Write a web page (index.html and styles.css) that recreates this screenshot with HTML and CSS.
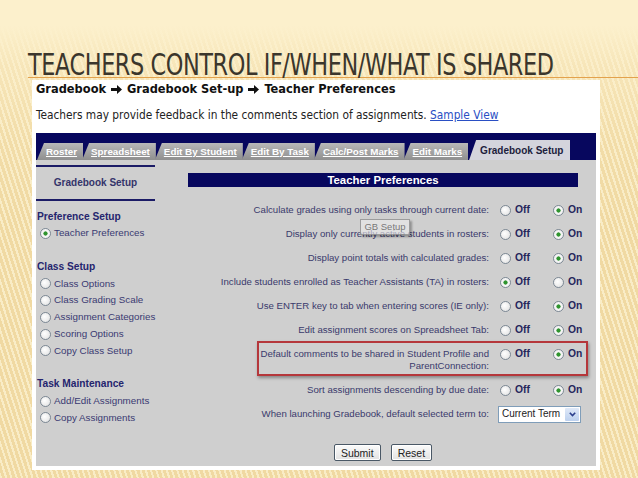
FILE: index.html
```html
<!DOCTYPE html>
<html lang="en">
<head>
    <meta charset="UTF-8">
    <meta name="viewport" content="width=device-width, initial-scale=1.0">
    <link rel="stylesheet" href="styles.css">
    <title>Teachers Control If/When/What Is Shared</title>
</head>
<body>
    <div class="slide">
        <h1 class="title"><span class="title-text">TEACHERS CONTROL IF/WHEN/WHAT IS SHARED</span></h1>

        <div class="shot">
            <div class="crumbs">Gradebook <svg class="arrow" width="11" height="9" viewBox="0 0 11 9"><path d="M0 3 H6 V0 L11 4.5 L6 9 V6 H0 Z" fill="#111"/></svg> Gradebook Set-up <svg class="arrow" width="11" height="9" viewBox="0 0 11 9"><path d="M0 3 H6 V0 L11 4.5 L6 9 V6 H0 Z" fill="#111"/></svg> Teacher Preferences</div>
            <p class="intro">Teachers may provide feedback in the comments section of assignments. <a href="#">Sample View</a></p>

            <div class="tabbar">
                <a class="tab" href="#">Roster</a>
                <a class="tab" href="#">Spreadsheet</a>
                <a class="tab" href="#">Edit By Student</a>
                <a class="tab" href="#">Edit By Task</a>
                <a class="tab" href="#">Calc/Post Marks</a>
                <a class="tab" href="#">Edit Marks</a>
                <span class="tab active">Gradebook Setup</span>
            </div>

            <div class="panel">
                <div class="side">
                    <div class="side-head">Gradebook Setup</div>

                    <div class="group">
                        <div class="group-title">Preference Setup</div>
                        <div class="opt"><span class="radio on"></span>Teacher Preferences</div>
                    </div>

                    <div class="group">
                        <div class="group-title">Class Setup</div>
                        <div class="opt"><span class="radio"></span>Class Options</div>
                        <div class="opt"><span class="radio"></span>Class Grading Scale</div>
                        <div class="opt"><span class="radio"></span>Assignment Categories</div>
                        <div class="opt"><span class="radio"></span>Scoring Options</div>
                        <div class="opt"><span class="radio"></span>Copy Class Setup</div>
                    </div>

                    <div class="group">
                        <div class="group-title">Task Maintenance</div>
                        <div class="opt"><span class="radio"></span>Add/Edit Assignments</div>
                        <div class="opt"><span class="radio"></span>Copy Assignments</div>
                    </div>
                </div>

                <div class="main">
                    <div class="bar">Teacher Preferences</div>

                    <div class="prefs">
                        <div class="row">
                            <div class="label">Calculate grades using only tasks through current date:</div>
                            <div class="choice"><span class="radio"></span>Off</div>
                            <div class="choice"><span class="radio on"></span>On</div>
                        </div>
                        <div class="row">
                            <div class="label">Display only currently active students in rosters:</div>
                            <div class="choice"><span class="radio"></span>Off</div>
                            <div class="choice"><span class="radio on"></span>On</div>
                        </div>
                        <div class="row">
                            <div class="label">Display point totals with calculated grades:</div>
                            <div class="choice"><span class="radio"></span>Off</div>
                            <div class="choice"><span class="radio on"></span>On</div>
                        </div>
                        <div class="row">
                            <div class="label">Include students enrolled as Teacher Assistants (TA) in rosters:</div>
                            <div class="choice"><span class="radio on"></span>Off</div>
                            <div class="choice"><span class="radio"></span>On</div>
                        </div>
                        <div class="row">
                            <div class="label">Use ENTER key to tab when entering scores (IE only):</div>
                            <div class="choice"><span class="radio"></span>Off</div>
                            <div class="choice"><span class="radio on"></span>On</div>
                        </div>
                        <div class="row">
                            <div class="label">Edit assignment scores on Spreadsheet Tab:</div>
                            <div class="choice"><span class="radio"></span>Off</div>
                            <div class="choice"><span class="radio on"></span>On</div>
                        </div>
                        <div class="row highlight">
                            <div class="label">Default comments to be shared in Student Profile and<br>ParentConnection:</div>
                            <div class="choice"><span class="radio"></span>Off</div>
                            <div class="choice"><span class="radio on"></span>On</div>
                        </div>
                        <div class="row">
                            <div class="label">Sort assignments descending by due date:</div>
                            <div class="choice"><span class="radio"></span>Off</div>
                            <div class="choice"><span class="radio on"></span>On</div>
                        </div>
                        <div class="row">
                            <div class="label">When launching Gradebook, default selected term to:</div>
                            <div class="select">
                                <span class="select-value">Current Term</span>
                                <span class="select-btn">
                                    <svg width="7" height="5" viewBox="0 0 7 5"><path d="M0.8 0.8 L3.5 3.6 L6.2 0.8" fill="none" stroke="#2b3f8c" stroke-width="1.6"/></svg>
                                </span>
                            </div>
                        </div>
                    </div>

                    <div class="buttons">
                        <button class="btn">Submit</button>
                        <button class="btn">Reset</button>
                    </div>

                    <div class="tip">GB Setup</div>
                </div>
            </div>
        </div>
    </div>
</body>
</html>
```

FILE: styles.css
```css
body {
    margin: 0;
    padding: 0;
}

.slide {
    width: 638px;
    height: 478px;
    overflow: hidden;
    background:
        linear-gradient(#fcf0cc 0, #fcf0cc 25px, rgba(252, 240, 204, 0.55) 65px, rgba(252, 240, 204, 0.15) 140px, rgba(252, 240, 204, 0) 220px),
        repeating-linear-gradient(72deg, rgba(255, 249, 222, 0.6) 0 2px, rgba(255, 249, 222, 0) 2px 5px),
        #f0d9a2;
}

.title {
    margin: 0 0 0 28px;
    padding-top: 53px;
    height: 24px;
    white-space: nowrap;
    font-family: "DejaVu Sans Condensed", "DejaVu Sans", sans-serif;
    font-stretch: condensed;
    font-weight: normal;
    font-size: 30px;
    line-height: 24px;
    letter-spacing: -0.5px;
    color: #3b362c;
    border-bottom: 1px solid #e3a24c;
}

.title-text {
    display: inline-block;
    transform: scaleX(0.83);
    transform-origin: left center;
}

.shot {
    margin: 2px 0 0 32px;
    width: 560px;
    height: 386px;
    padding: 0 4px 4px 4px;
    background-color: #fff;
    display: flex;
    flex-direction: column;
}

.crumbs {
    padding-top: 1px;
    font-family: "DejaVu Sans Condensed", "DejaVu Sans", sans-serif;
    font-stretch: condensed;
    font-weight: bold;
    font-size: 12.7px;
    line-height: 16px;
    color: #111;
}

.arrow {
    vertical-align: -1px;
    margin: 0 1px;
}

.intro {
    margin: 10px 0 0 0;
    font-family: "DejaVu Sans Condensed", "DejaVu Sans", sans-serif;
    font-stretch: condensed;
    font-size: 11.8px;
    line-height: 16px;
    color: #222;
}

.intro a {
    color: #2a4fc4;
}

.tabbar {
    margin-top: 10px;
    height: 27px;
    flex-shrink: 0;
    padding-left: 1px;
    background-color: #07075e;
    display: flex;
    align-items: flex-end;
}

.tab {
    height: 17px;
    line-height: 17px;
    padding: 0 6px 0 9px;
    margin-right: -1px;
    background: linear-gradient(#b8b8b8, #8f8f8f);
    color: #fff;
    font-family: "Liberation Sans", Arial, sans-serif;
    font-weight: bold;
    font-size: 9.8px;
    text-decoration: underline;
    clip-path: polygon(7px 0, 100% 0, 100% 100%, 0 100%);
}

.tab.active {
    height: 20px;
    line-height: 21px;
    padding: 0 7px 0 11px;
    margin-left: 2px;
    background: #d4d4dc;
    color: #1d1d3c;
    font-size: 10px;
    text-decoration: none;
}

.panel {
    flex: 1;
    display: flex;
    background-color: #cfcfcf;
    font-family: "Liberation Sans", Arial, sans-serif;
}

.side {
    width: 120px;
    flex-shrink: 0;
}

.side-head {
    margin: 5px 1px 7.5px 0;
    height: 32px;
    line-height: 32px;
    border-top: 2px solid #1b1b66;
    border-bottom: 2px solid #1b1b66;
    text-align: center;
    font-weight: bold;
    font-size: 10px;
    color: #34346a;
}

.group {
    line-height: 16.75px;
}

.group + .group {
    margin-top: 16.75px;
}

.group-title {
    padding-left: 1px;
    font-weight: bold;
    font-size: 10.2px;
    color: #25256e;
}

.opt {
    display: flex;
    align-items: center;
    gap: 3px;
    padding-left: 4px;
    font-size: 9.8px;
    color: #3a3a72;
}

.radio {
    display: inline-block;
    box-sizing: border-box;
    width: 11px;
    height: 11px;
    flex-shrink: 0;
    border: 1px solid #7c8894;
    border-radius: 50%;
    background: radial-gradient(circle at 40% 40%, #ffffff, #dedede);
}

.radio.on {
    background: radial-gradient(circle, #2f942f 0 1.8px, #f4f4f4 2.4px);
}

.main {
    flex: 1;
    position: relative;
    padding-top: 13px;
    margin-left: 32px;
}

.bar {
    margin-right: 18px;
    height: 14px;
    line-height: 14px;
    background-color: #07075e;
    color: #fff;
    text-align: center;
    font-weight: bold;
    font-size: 11.4px;
}

.prefs {
    margin-top: 11px;
}

.row {
    display: grid;
    grid-template-columns: 1fr 53px 44px;
    align-items: start;
    padding: 6px 0;
    line-height: 12px;
}

.label {
    padding-right: 10px;
    text-align: right;
    font-size: 9.65px;
    color: #3a3a6c;
}

.choice {
    display: flex;
    align-items: center;
    gap: 4px;
    height: 12px;
    padding-left: 1px;
    font-weight: bold;
    font-size: 10.3px;
    color: #26265c;
}

.highlight {
    position: relative;
}

.highlight::after {
    content: "";
    position: absolute;
    top: -1px;
    bottom: 2px;
    left: 69px;
    right: 8px;
    border: 2px solid #b5373b;
    box-shadow: 1px 2px 3px rgba(0, 0, 0, 0.35);
}

.select {
    grid-column: 2 / 4;
    display: flex;
    align-items: center;
    box-sizing: border-box;
    width: 83px;
    height: 17px;
    margin: -2.5px 0 -2.5px -1px;
    border: 1px solid #7f9db9;
    background-color: #fff;
    font-size: 10px;
    color: #222;
}

.select-value {
    flex: 1;
    padding-left: 3px;
}

.select-btn {
    width: 14px;
    height: 13px;
    margin-right: 1px;
    display: flex;
    align-items: center;
    justify-content: center;
    background: linear-gradient(#dfe9f8, #bcd0ee);
    border-radius: 1px;
}

.buttons {
    margin-top: 18px;
    padding-right: 18px;
    display: flex;
    justify-content: center;
    gap: 10px;
}

.btn {
    height: 17px;
    padding: 0 6px;
    border: 1px solid #4a5866;
    border-radius: 2px;
    background: linear-gradient(#fbfbfb, #e2e2e2);
    box-shadow: inset 0 0 0 1px #fff;
    font-family: "Liberation Sans", Arial, sans-serif;
    font-size: 10.5px;
    color: #222;
    cursor: pointer;
}

.tip {
    position: absolute;
    left: 172px;
    top: 59px;
    width: 48px;
    height: 14px;
    line-height: 14px;
    border: 1px solid rgba(110, 110, 110, 0.6);
    background-color: rgba(236, 236, 236, 0.6);
    box-shadow: 2px 2px 2px rgba(0, 0, 0, 0.3);
    text-align: center;
    font-size: 9.5px;
    color: rgba(90, 90, 90, 0.8);
}
```
